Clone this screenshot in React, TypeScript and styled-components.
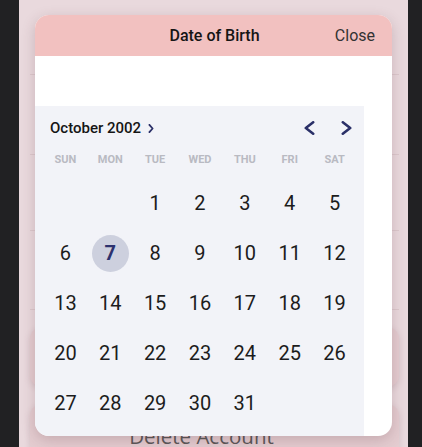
import React from "react";
import styled, { createGlobalStyle } from "styled-components";

const Global = createGlobalStyle`
  html, body { margin: 0; padding: 0; background: #212123; }
  body { font-family: Roboto, "Noto Sans", sans-serif; }
  * { box-sizing: border-box; }
`;

const Page = styled.div`
  width: 422px;
  height: 447px;
  display: flex;
  padding-left: 19px;
  overflow: hidden;
  background: #212123;
`;

const Screen = styled.div`
  position: relative;
  width: 389px;
  height: 447px;
  background: #e9d9dd;
  display: flex;
  flex-direction: column;
  padding: 0 9px 0 11px;
  overflow: hidden;
`;

const ListRow = styled.div<{ $h: number }>`
  height: ${(p) => p.$h}px;
  flex: none;
  border-bottom: 1px solid #dcc9cd;
`;

const Card = styled.div<{ $h: number; $mt: number }>`
  flex: none;
  height: ${(p) => p.$h}px;
  margin-top: ${(p) => p.$mt}px;
  border-radius: 12px;
  background: #e4ccd0;
  box-shadow: 0 2px 6px rgba(120, 80, 90, 0.18);
  display: flex;
  justify-content: center;
  align-items: flex-start;
`;

const DeleteText = styled.span`
  font-family: "Open Sans", sans-serif;
  font-size: 20.5px;
  line-height: 27px;
  color: #595758;
  margin-top: 19px;
  margin-right: 26px;
`;

const Modal = styled.div`
  position: absolute;
  left: 16px;
  top: 15px;
  width: 357px;
  height: 421px;
  border-radius: 14px;
  background: #ffffff;
  overflow: hidden;
  box-shadow: 0 4px 14px rgba(90, 50, 60, 0.22);
  display: flex;
  flex-direction: column;
`;

const ModalHeader = styled.div`
  flex: none;
  height: 41px;
  background: #f2c1c0;
  position: relative;
  display: flex;
  align-items: center;
  justify-content: center;
`;

const Title = styled.div`
  font-family: Roboto, sans-serif;
  font-weight: 500;
  font-size: 16px;
  color: #151515;
  padding-left: 2px;
`;

const CloseButton = styled.button`
  position: absolute;
  right: 17px;
  top: 0;
  height: 41px;
  border: none;
  background: transparent;
  padding: 0;
  font-family: Roboto, sans-serif;
  font-size: 16px;
  color: #333;
`;

const Spacer = styled.div`
  flex: none;
  height: 50px;
`;

const Calendar = styled.div`
  flex: 1;
  width: 329px;
  background: #f2f3f8;
  display: flex;
  flex-direction: column;
`;

const CalHeader = styled.div`
  height: 44px;
  display: flex;
  align-items: center;
  padding: 0 12px 0 15px;
`;

const MonthLabel = styled.div`
  font-family: Roboto, sans-serif;
  font-weight: 500;
  font-size: 15px;
  color: #151515;
  display: flex;
  align-items: center;
  gap: 7px;
`;

const NavGroup = styled.div`
  margin-left: auto;
  display: flex;
  align-items: center;
  gap: 26px;
`;

const Grid = styled.div`
  display: grid;
  grid-template-columns: repeat(7, 1fr);
  padding: 0 7px 0 8px;
`;

const WeekDay = styled.div`
  height: 18px;
  display: flex;
  align-items: center;
  justify-content: center;
  font-family: Roboto, sans-serif;
  font-weight: 700;
  font-size: 11px;
  color: #b9bac2;
  margin-bottom: 10px;
`;

const Day = styled.div`
  height: 50px;
  display: flex;
  align-items: center;
  justify-content: center;
`;

const DayNum = styled.span<{ $selected?: boolean }>`
  width: 37px;
  height: 37px;
  border-radius: 50%;
  display: flex;
  align-items: center;
  justify-content: center;
  font-family: Roboto, sans-serif;
  font-size: 20px;
  font-weight: ${(p) => (p.$selected ? 700 : 400)};
  color: ${(p) => (p.$selected ? "#2c316e" : "#1c1c1c")};
  background: ${(p) => (p.$selected ? "#cdd0de" : "transparent")};
`;

const Chevron = ({ dir, w, h, sw }: { dir: "l" | "r"; w: number; h: number; sw: number }) => (
  <svg width={w} height={h} viewBox={`0 0 ${w} ${h}`} fill="none">
    <path
      d={
        dir === "r"
          ? `M${sw / 2 + 0.5} ${sw / 2} L${w - sw / 2 - 0.5} ${h / 2} L${sw / 2 + 0.5} ${h - sw / 2}`
          : `M${w - sw / 2 - 0.5} ${sw / 2} L${sw / 2 + 0.5} ${h / 2} L${w - sw / 2 - 0.5} ${h - sw / 2}`
      }
      stroke="#2b3068"
      strokeWidth={sw}
      strokeLinecap="round"
      strokeLinejoin="round"
    />
  </svg>
);

const weekdays = ["SUN", "MON", "TUE", "WED", "THU", "FRI", "SAT"];

export default function App() {
  const cells: (number | null)[] = [null, null];
  for (let d = 1; d <= 31; d++) cells.push(d);

  return (
    <>
      <Global />
      <Page>
        <Screen>
          <ListRow $h={75} />
          <ListRow $h={80} />
          <ListRow $h={76} />
          <ListRow $h={79} />
          <Card $h={60} $mt={17} />
          <Card $h={60} $mt={17}>
            <DeleteText>Delete Account</DeleteText>
          </Card>
          <Modal>
            <ModalHeader>
              <Title>Date of Birth</Title>
              <CloseButton>Close</CloseButton>
            </ModalHeader>
            <Spacer />
            <Calendar>
              <CalHeader>
                <MonthLabel>
                  October 2002
                  <Chevron dir="r" w={6} h={9} sw={1.8} />
                </MonthLabel>
                <NavGroup>
                  <Chevron dir="l" w={11} h={14} sw={2.6} />
                  <Chevron dir="r" w={11} h={14} sw={2.6} />
                </NavGroup>
              </CalHeader>
              <Grid>
                {weekdays.map((w) => (
                  <WeekDay key={w}>{w}</WeekDay>
                ))}
                {cells.map((d, i) => (
                  <Day key={i}>
                    {d !== null && <DayNum $selected={d === 7}>{d}</DayNum>}
                  </Day>
                ))}
              </Grid>
            </Calendar>
          </Modal>
        </Screen>
      </Page>
    </>
  );
}
